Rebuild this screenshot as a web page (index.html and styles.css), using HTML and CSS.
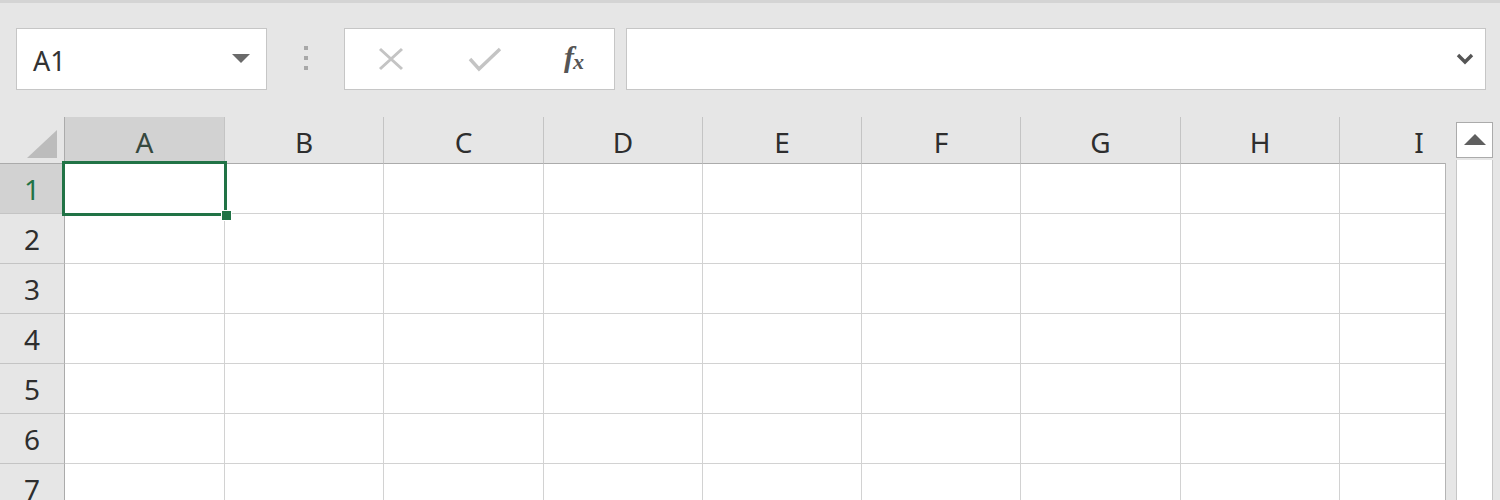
FILE: index.html
```html
<!DOCTYPE html>
<html lang="en">
<head>
	<meta charset="UTF-8">
	<title>Sheet1</title>
<link rel="stylesheet" href="styles.css">
</head>
<body>
	<div class='topEdge'></div>
	<div class='formulaBar'>
		<div class='nameBox'>
			<span>A1</span>
			<svg class='caret' width='18' height='9' viewBox='0 0 18 9'><path d='M0 0h18L9 9z' fill='#6a6a6a'/></svg>
		</div>
		<div class='grip'><i></i><i></i><i></i></div>
		<div class='fxButtons'>
			<svg width='28' height='24' viewBox='0 0 28 24'><path d='M3 2l22 20M25 2L3 22' stroke='#c4c4c4' stroke-width='3' fill='none'/></svg>
			<svg width='34' height='26' viewBox='0 0 34 26'><path d='M2 13l9 10L32 3' stroke='#c4c4c4' stroke-width='3.4' fill='none'/></svg>
			<span class='fx'>f<sub>x</sub></span>
		</div>
		<div class='formulaInput'>
			<svg width='18' height='12' viewBox='0 0 18 12'><path d='M2 2l7 7 7-7' stroke='#555' stroke-width='3.4' fill='none'/></svg>
		</div>
	</div>

	<div class='sheet'>
		<div class='gridWrap'>
			<div class='grid'>
				<div class='corner'><b></b></div>
				<div class='colHead sel'>A</div><div class='colHead'>B</div><div class='colHead'>C</div><div class='colHead'>D</div><div class='colHead'>E</div><div class='colHead'>F</div><div class='colHead'>G</div><div class='colHead'>H</div><div class='colHead'>I</div>

				<div class='rowHead sel'>1</div><div></div><div></div><div></div><div></div><div></div><div></div><div></div><div></div><div></div>
				<div class='rowHead'>2</div><div></div><div></div><div></div><div></div><div></div><div></div><div></div><div></div><div></div>
				<div class='rowHead'>3</div><div></div><div></div><div></div><div></div><div></div><div></div><div></div><div></div><div></div>
				<div class='rowHead'>4</div><div></div><div></div><div></div><div></div><div></div><div></div><div></div><div></div><div></div>
				<div class='rowHead'>5</div><div></div><div></div><div></div><div></div><div></div><div></div><div></div><div></div><div></div>
				<div class='rowHead'>6</div><div></div><div></div><div></div><div></div><div></div><div></div><div></div><div></div><div></div>
				<div class='rowHead'>7</div><div></div><div></div><div></div><div></div><div></div><div></div><div></div><div></div><div></div>
			</div>
			<div class='selection'><span class='handle'></span></div>
		</div>
		<div class='vScroll'>
			<div class='upBtn'>
				<svg width='22' height='11' viewBox='0 0 22 11'><path d='M0 11h22L11 0z' fill='#5f5f5f'/></svg>
			</div>
			<div class='track'></div>
		</div>
	</div>
</body>
</html>
```

FILE: styles.css
```css
html,body{
	margin:0;
	height:500px;
	overflow:hidden;
}
body{
	background:#e6e6e6;
	font-family:"Noto Sans","Open Sans",sans-serif;
	color:#2e2e2e;
}
.topEdge{
	height:3px;
	background:#d4d4d4;
}

/* formula bar */
.formulaBar{
	display:flex;
	padding:25px 14px 0 16px;
	height:62px;
}
.nameBox,.fxButtons,.formulaInput{
	box-sizing:border-box;
	height:62px;
	background:#fff;
	border:1px solid #c6c6c6;
	display:flex;
	align-items:center;
}
.nameBox{
	width:251px;
	padding:0 16px 0 16px;
	justify-content:space-between;
	font-size:27px;
	color:#333;
}
.nameBox span{ margin-top:3px; }
.caret{ margin-top:-2px; }
.grip{
	width:77px;
	display:flex;
	flex-direction:column;
	align-items:center;
	justify-content:center;
	gap:6px;
	margin-top:-2px;
}
.grip i{
	display:block;
	width:4px;height:4px;
	background:#a8a8a8;
}
.fxButtons{
	width:271px;
	padding:0 30px 0 32px;
	justify-content:space-between;
}
.fx{
	font-family:"Liberation Serif","DejaVu Serif",serif;
	font-style:italic;
	font-weight:bold;
	font-size:30px;
	color:#555;
	margin-top:-4px;
}
.fx sub{
	font-size:22px;
	vertical-align:-2px;
	margin-left:-1px;
}
.formulaInput{
	flex:1;
	margin-left:11px;
	justify-content:flex-end;
	padding-right:11px;
}

/* sheet */
.sheet{
	display:flex;
	margin-top:27px;
}
.gridWrap{
	position:relative;
	width:1446px;
	height:400px;
	overflow:hidden;
	flex:none;
}
.grid{
	display:grid;
	grid-template-columns:65px 160px 159px 160px 159px 159px 159px 160px 159px 159px;
	grid-template-rows:47px;
	grid-auto-rows:50px;
	width:1599px;
	font-size:28px;
}
.grid>div{
	box-sizing:border-box;
	background:#fff;
	border-right:1px solid #d2d2d2;
	border-bottom:1px solid #d2d2d2;
}
.grid>.corner,.grid>.colHead,.grid>.rowHead{
	background:#e6e6e6;
	display:flex;
	align-items:center;
	justify-content:center;
	color:#2e2e2e;
}
.grid>.colHead{
	border-right-color:#c4c4c4;
	border-bottom-color:#ababab;
	padding-top:4px;
}
.grid>.corner{
	position:relative;
	border-right-color:#ababab;
	border-bottom-color:#ababab;
}
.corner b{
	position:absolute;
	right:7px;bottom:5px;
	width:0;height:0;
	border-left:30px solid transparent;
	border-bottom:28px solid #bcbcbc;
}
.grid>.rowHead{
	border-right-color:#ababab;
	border-bottom-color:#c4c4c4;
}
.grid>.sel{
	background:#d2d2d2;
}
.grid>.colHead.sel{ color:#36483e; }
.grid>.rowHead.sel{ color:#217346; }
.gridWrap:after{
	content:'';
	position:absolute;
	top:46px;right:0;bottom:0;
	width:1px;
	background:#b4b4b4;
}

/* active cell */
.selection{
	position:absolute;
	left:62px;top:44px;
	width:159px;height:49px;
	border:3px solid #217346;
}
.handle{
	position:absolute;
	right:-8px;bottom:-8px;
	width:9px;height:9px;
	background:#217346;
	border:1px solid #fff;
}

/* scrollbar */
.vScroll{
	margin-left:10px;
	margin-top:5px;
	width:37px;
	display:flex;
	flex-direction:column;
}
.upBtn{
	box-sizing:border-box;
	height:36px;
	background:#fff;
	border:1px solid #ababab;
	display:flex;
	align-items:center;
	justify-content:center;
}
.upBtn svg{ margin-top:-2px; }
.track{
	flex:1;
	height:400px;
	margin-top:2px;
	background:#fff;
	border-left:1px solid #c6c6c6;
	border-right:1px solid #c6c6c6;
}
```
